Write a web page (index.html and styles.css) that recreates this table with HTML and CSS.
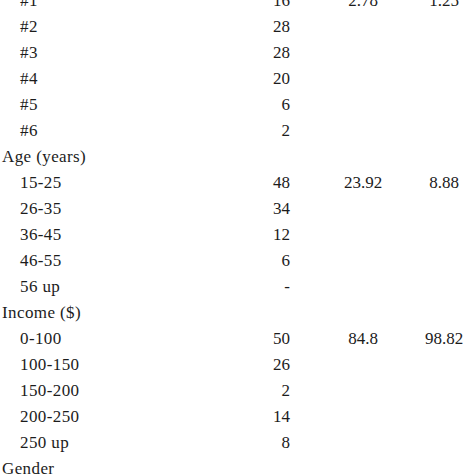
FILE: index.html
```html
<!DOCTYPE html>
<html>
<head>
<meta charset="utf-8">
<link rel="stylesheet" href="styles.css">
</head>
<body>
<div class="table">
  <div class="row"><span class="label item">#1</span><span class="n">16</span><span class="mean">2.78</span><span class="sd">1.25</span></div>
  <div class="row"><span class="label item">#2</span><span class="n">28</span><span class="mean"></span><span class="sd"></span></div>
  <div class="row"><span class="label item">#3</span><span class="n">28</span><span class="mean"></span><span class="sd"></span></div>
  <div class="row"><span class="label item">#4</span><span class="n">20</span><span class="mean"></span><span class="sd"></span></div>
  <div class="row"><span class="label item">#5</span><span class="n">6</span><span class="mean"></span><span class="sd"></span></div>
  <div class="row"><span class="label item">#6</span><span class="n">2</span><span class="mean"></span><span class="sd"></span></div>
  <div class="row"><span class="label cat">Age (years)</span><span class="n"></span><span class="mean"></span><span class="sd"></span></div>
  <div class="row"><span class="label item">15-25</span><span class="n">48</span><span class="mean">23.92</span><span class="sd">8.88</span></div>
  <div class="row"><span class="label item">26-35</span><span class="n">34</span><span class="mean"></span><span class="sd"></span></div>
  <div class="row"><span class="label item">36-45</span><span class="n">12</span><span class="mean"></span><span class="sd"></span></div>
  <div class="row"><span class="label item">46-55</span><span class="n">6</span><span class="mean"></span><span class="sd"></span></div>
  <div class="row"><span class="label item">56 up</span><span class="n">-</span><span class="mean"></span><span class="sd"></span></div>
  <div class="row"><span class="label cat">Income ($)</span><span class="n"></span><span class="mean"></span><span class="sd"></span></div>
  <div class="row"><span class="label item">0-100</span><span class="n">50</span><span class="mean">84.8</span><span class="sd">98.82</span></div>
  <div class="row"><span class="label item">100-150</span><span class="n">26</span><span class="mean"></span><span class="sd"></span></div>
  <div class="row"><span class="label item">150-200</span><span class="n">2</span><span class="mean"></span><span class="sd"></span></div>
  <div class="row"><span class="label item">200-250</span><span class="n">14</span><span class="mean"></span><span class="sd"></span></div>
  <div class="row"><span class="label item">250 up</span><span class="n">8</span><span class="mean"></span><span class="sd"></span></div>
  <div class="row"><span class="label cat">Gender</span><span class="n"></span><span class="mean"></span><span class="sd"></span></div>
</div>
</body>
</html>
```
FILE: styles.css
```css
html, body {
  margin: 0;
  padding: 0;
  background: #ffffff;
  overflow: hidden;
}
body {
  font-family: "Liberation Serif", "Times New Roman", serif;
  font-size: 17px;
  color: #1c1c1c;
}
.table {
  width: 474px;
  margin-top: -12px;
}
.row {
  display: grid;
  grid-template-columns: 250px 40px 110px 74px;
  line-height: 26px;
  height: 26px;
}
.label {
  white-space: nowrap;
  letter-spacing: 0.4px;
}
.cat {
  padding-left: 2px;
}
.item {
  padding-left: 20px;
}
.n {
  text-align: right;
}
.mean {
  padding-left: 36px;
  text-align: center;
}
.sd {
  padding-left: 14px;
  text-align: center;
}
```
